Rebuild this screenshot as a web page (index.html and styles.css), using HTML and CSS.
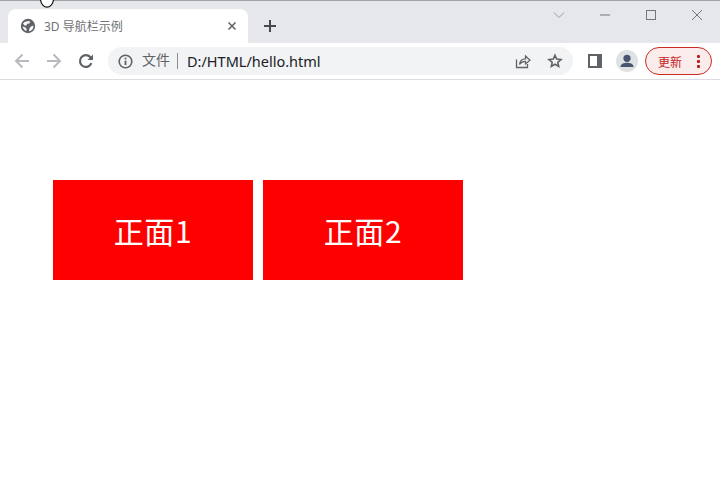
FILE: index.html
```html
<!DOCTYPE html>
<html lang="zh-CN">
<head>
<meta charset="utf-8">
<title>3D 导航栏示例</title>
<link rel="stylesheet" href="styles.css">
</head>
<body>
<header class="chrome">
  <div class="tabstrip">
    <div class="tab">
      <svg class="favicon" width="16" height="16" viewBox="0 0 16 16"><circle cx="8" cy="8" r="7.2" fill="#5f6368"/><path d="M3 5.6C4.4 3.4 7.6 2.6 10.2 3.6L9.4 5.4 7 5.8 6.6 7.6 4.6 7.4Z M13.4 7.4 13.2 10C12.4 12 10.8 13 9 13.2L9.4 10.8 10.6 8.8Z M2.6 8.6 5.4 9.4 6.6 11 6.4 13C4.4 12.4 3 10.8 2.6 8.6Z" fill="#fff"/></svg>
      <span class="tab-title">3D 导航栏示例</span>
      <svg class="tab-close" width="10" height="10" viewBox="0 0 10 10"><path d="M1.5 1.5 8.5 8.5M8.5 1.5 1.5 8.5" stroke="#5f6368" stroke-width="1.6" fill="none"/></svg>
    </div>
    <svg class="new-tab" width="14" height="14" viewBox="0 0 14 14"><path d="M7 1V13M1 7H13" stroke="#45484d" stroke-width="2" fill="none"/></svg>
    <div class="window-controls">
      <svg width="12" height="8" viewBox="0 0 12 8"><path d="M1 1.5 6 6.5 11 1.5" stroke="#9a9ca0" fill="none"/></svg>
      <svg width="12" height="2" viewBox="0 0 12 2"><path d="M1 1H11" stroke="#74767a" fill="none"/></svg>
      <svg width="12" height="12" viewBox="0 0 12 12"><rect x="1.5" y="1.5" width="9" height="9" stroke="#74767a" fill="none"/></svg>
      <svg width="12" height="12" viewBox="0 0 12 12"><path d="M1 1 11 11M11 1 1 11" stroke="#74767a" fill="none"/></svg>
    </div>
  </div>
  <div class="toolbar">
    <svg class="nav" width="16" height="16" viewBox="0 0 16 16"><path d="M15 8H2M8.5 1.5 2 8l6.5 6.5" stroke="#b8babd" stroke-width="2" fill="none"/></svg>
    <svg class="nav" width="16" height="16" viewBox="0 0 16 16"><path d="M1 8H14M7.5 1.5 14 8l-6.5 6.5" stroke="#b8babd" stroke-width="2" fill="none"/></svg>
    <svg class="nav" width="16" height="16" viewBox="0 0 16 16"><path d="M13.4 10.2A5.9 5.9 0 1 1 12.2 4L14 6" stroke="#5f6368" stroke-width="2.2" fill="none"/><path d="M9.4 7H15V1.4Z" fill="#5f6368"/></svg>
    <div class="omnibox">
      <svg width="15" height="15" viewBox="0 0 15 15"><circle cx="7.5" cy="7.5" r="6.3" stroke="#5f6368" stroke-width="1.6" fill="none"/><path d="M7.5 6.6V11" stroke="#5f6368" stroke-width="1.8"/><rect x="6.6" y="3.6" width="1.8" height="1.8" fill="#5f6368"/></svg>
      <span class="scheme">文件</span>
      <span class="divider"></span>
      <span class="url">D:/HTML/hello.html</span>
      <svg class="share" width="16" height="16" viewBox="0 0 16 16"><path d="M1.5 6.5V14.5H12.5V11" stroke="#5f6368" stroke-width="1.3" fill="none"/><path d="M4.5 11.5C5 7.5 7.5 5.8 10.5 5.8V3L15 7.2 10.5 11V8.4C8 8.4 6 9.4 4.5 11.5Z" stroke="#5f6368" stroke-width="1.2" fill="none"/></svg>
      <svg class="star" width="16" height="16" viewBox="0 0 16 16"><path d="M8 2.2 9.7 6.1 14 6.5 10.8 9.3 11.7 13.5 8 11.3 4.3 13.5 5.2 9.3 2 6.5 6.3 6.1Z" stroke="#5f6368" stroke-width="1.6" fill="none"/></svg>
    </div>
    <svg class="side" width="14" height="14" viewBox="0 0 14 14"><path fill-rule="evenodd" d="M0 0H14V14H0ZM2 2V12H9V2Z" fill="#5f6368"/></svg>
    <span class="avatar"><svg width="22" height="22" viewBox="0 0 22 22"><circle cx="11" cy="8.3" r="3.6" fill="#47566e"/><path d="M4.5 16.5C5 13.6 8 12.8 11 12.8S17 13.6 17.5 16.5V17H4.5Z" fill="#47566e"/></svg></span>
    <div class="update">
      <span class="update-label">更新</span>
      <span class="update-dots"><i></i><i></i><i></i></span>
    </div>
  </div>
</header>
<main class="page">
  <div class="card">正面1</div>
  <div class="card">正面2</div>
</main>
<svg class="cursor" width="16" height="8" viewBox="0 0 16 8"><path d="M1.5 0C2 4 5 7.2 8 7.2S14 4 14.5 0" fill="#fff" stroke="#111" stroke-width="1.2"/></svg>
</body>
</html>
```

FILE: styles.css
```css
* { box-sizing: border-box; }
html, body { margin: 0; height: 100%; background: #fff; overflow: hidden; }
body { font-family: "Liberation Sans", "Noto Sans CJK SC", sans-serif; position: relative; }

.chrome { display: flex; flex-direction: column; height: 80px; border-bottom: 1px solid #dadce0; }
.tabstrip { display: flex; align-items: flex-end; height: 43px; background: #e5e7eb; border-top: 1px solid #9fa1a5; padding-left: 8px; }
.tab { display: flex; align-items: center; width: 240px; height: 34px; background: #fff; border-radius: 8px 8px 0 0; padding: 0 11px 0 12px; }
.tab-title { flex: 1; margin-left: 8px; font-size: 12px; color: #6e7074; white-space: nowrap; font-family: "Noto Sans", "Noto Sans CJK SC", sans-serif; }
.new-tab { margin: 0 0 10px 15px; }
.window-controls { display: flex; align-items: center; margin-left: auto; gap: 34px; padding: 0 17px 0 0; align-self: flex-start; height: 28px; }

.toolbar { display: flex; align-items: center; height: 36px; padding-left: 14px; }
.nav { margin-right: 16px; }
.nav:nth-child(3) { margin-right: 14px; }
.omnibox { display: flex; align-items: center; width: 465px; height: 28px; border-radius: 14px; background: #f1f3f4; padding: 0 10px 0 10px; }
.scheme { margin-left: 9px; font-size: 14px; line-height: 20px; color: #5f6368; position: relative; top: -1px; }
.divider { width: 1px; height: 16px; background: #8a8c90; margin: 0 9px 0 7px; }
.url { flex: 1; font-size: 14.5px; line-height: 20px; color: #202124; font-family: "Noto Sans", sans-serif; }
.share { margin-right: 16px; }
.side { margin-left: 15px; }
.avatar { display: flex; width: 22px; height: 22px; margin-left: 14px; border-radius: 50%; background: #dfe1e5; }
.update { display: flex; align-items: center; width: 67px; height: 28px; margin-left: 7px; border: 1px solid #cc2a22; border-radius: 14px; background: #f9ecea; padding-left: 12px; }
.update-label { font-size: 12px; color: #c5221f; flex: 1; }
.update-dots { display: flex; flex-direction: column; gap: 2px; margin-right: 11px; }
.update-dots i { display: block; width: 3px; height: 3px; border-radius: 1px; background: #b3201c; }

.page { display: flex; gap: 10px; padding: 100px 0 0 53px; }
.card { display: flex; align-items: center; justify-content: center; width: 200px; height: 100px; background: #f00; color: #fff; font-size: 30px; line-height: 30px; font-family: "Noto Sans CJK SC", sans-serif; font-weight: 400; letter-spacing: 0.6px; }

.cursor { position: absolute; left: 39px; top: 0; }
```
